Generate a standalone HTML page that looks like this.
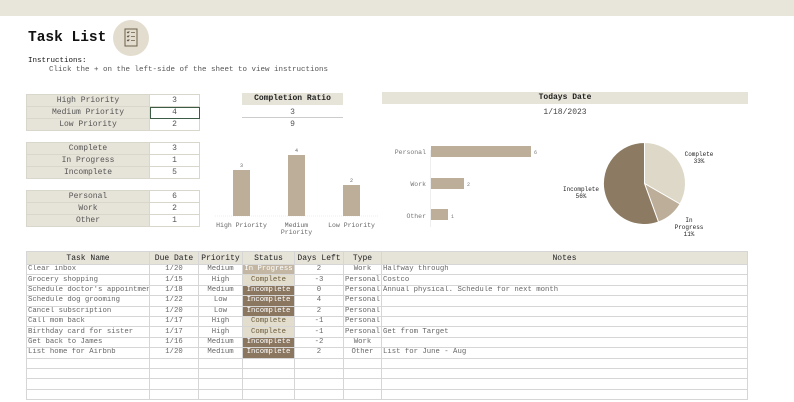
<!DOCTYPE html>
<html><head><style>
*{margin:0;padding:0;box-sizing:border-box}
body{width:794px;height:402px;overflow:hidden;background:#fff;font-family:"Liberation Mono",monospace;color:#555;position:relative;font-size:8px}
.a{position:absolute;white-space:nowrap}
.band{left:0;top:0;width:794px;height:16px;background:#e8e5db}
.lt{position:absolute;left:26px;width:174px;border-collapse:collapse}
.lt td{height:12px;font-size:8px;text-align:center;border:1px solid #d9d6cc;padding:0;line-height:10px;color:#555}
.lt td:first-child{background:#e6e3d8;width:123px}
.hdr{background:#e6e3d8;text-align:center;color:#222;font-weight:bold;font-size:8px;line-height:12px;height:12px}
table.m{position:absolute;left:26px;top:251px;width:722px;border-collapse:collapse;table-layout:fixed}
table.m td,table.m th{border:1px solid #d6d6d6;height:10.4px;font-size:7.3px;line-height:9px;padding:0 1px;overflow:hidden;white-space:nowrap;color:#666;font-weight:normal}
table.m th{background:#e6e3d8;color:#222;height:13px;font-size:8px}
.c{text-align:center}
.ip{background:#c3b7a3;color:#fff!important;text-align:center}
.cp{background:#e2ddcc;color:#6a5a3c!important;text-align:center}
.ic{background:#8b7760;color:#fff!important;text-align:center}
</style></head><body>
<div class="a band"></div>
<div class="a" style="left:28px;top:30px;font-size:14.5px;font-weight:bold;color:#111">Task List</div>
<svg class="a" style="left:112px;top:20px" width="38" height="38"><circle cx="19" cy="18" r="18" fill="#e3ddcf"/><rect x="13" y="9" width="12" height="17" fill="none" stroke="#6b5e4a" stroke-width="1"/><g stroke="#6b5e4a" stroke-width="0.8"><path d="M15 12l1 1 1.5-1.5M19 12.5h4M15 16l1 1 1.5-1.5M19 16.5h4M15 20l1 1 1.5-1.5M19 20.5h4"/></g></svg>
<div class="a" style="left:28px;top:57px;font-size:7.5px;color:#111">Instructions:</div>
<div class="a" style="left:49px;top:66px;font-size:7.5px;color:#555">Click the + on the left-side of the sheet to view instructions</div>

<table class="lt" style="top:94px"><tr><td>High Priority</td><td>3</td></tr><tr><td>Medium Priority</td><td style="outline:1px solid #3d5c45;outline-offset:-1px">4</td></tr><tr><td>Low Priority</td><td>2</td></tr></table>
<table class="lt" style="top:142px"><tr><td>Complete</td><td>3</td></tr><tr><td>In Progress</td><td>1</td></tr><tr><td>Incomplete</td><td>5</td></tr></table>
<table class="lt" style="top:190px"><tr><td>Personal</td><td>6</td></tr><tr><td>Work</td><td>2</td></tr><tr><td>Other</td><td>1</td></tr></table>

<div class="a hdr" style="left:242px;top:93px;width:101px">Completion Ratio</div>
<div class="a" style="left:242px;top:108px;width:101px;text-align:center">3</div>
<div class="a" style="left:242px;top:117px;width:101px;height:1px;background:#ccc"></div>
<div class="a" style="left:242px;top:120px;width:101px;text-align:center">9</div>

<svg class="a" style="left:200px;top:140px" width="180" height="100" font-family="Liberation Mono,monospace" font-size="6.5" fill="#666">
<line x1="15" y1="76" x2="178" y2="76" stroke="#ddd" stroke-width="0.6" stroke-dasharray="1,1"/>
<rect x="33" y="30" width="17" height="46" fill="#bcae99"/>
<rect x="88" y="15" width="17" height="61" fill="#bcae99"/>
<rect x="143" y="45" width="17" height="31" fill="#bcae99"/>
<text x="41.5" y="27" text-anchor="middle" font-size="5">3</text>
<text x="96.5" y="12" text-anchor="middle" font-size="5">4</text>
<text x="151.5" y="42" text-anchor="middle" font-size="5">2</text>
<text x="41.5" y="87" text-anchor="middle">High Priority</text>
<text x="96.5" y="87" text-anchor="middle">Medium</text>
<text x="96.5" y="94" text-anchor="middle">Priority</text>
<text x="151.5" y="87" text-anchor="middle">Low Priority</text>
</svg>

<div class="a hdr" style="left:382px;top:92px;width:366px">Todays Date</div>
<div class="a" style="left:382px;top:108px;width:366px;text-align:center;font-size:8px;color:#444">1/18/2023</div>

<svg class="a" style="left:380px;top:135px" width="170" height="100" font-family="Liberation Mono,monospace" font-size="6.5" fill="#777">
<line x1="50.5" y1="15" x2="50.5" y2="92" stroke="#e3e3e3" stroke-width="0.6"/>
<rect x="51" y="11" width="100" height="11" fill="#bcae99"/>
<rect x="51" y="43" width="33" height="11" fill="#bcae99"/>
<rect x="51" y="74" width="17" height="11" fill="#bcae99"/>
<text x="46" y="19" text-anchor="end">Personal</text><text x="154" y="19" font-size="5">6</text>
<text x="46" y="51" text-anchor="end">Work</text><text x="87" y="51" font-size="5">2</text>
<text x="46" y="83" text-anchor="end">Other</text><text x="71" y="83" font-size="5">1</text>
</svg>

<svg class="a" style="left:555px;top:135px" width="200" height="110" font-family="Liberation Mono,monospace" font-size="6" fill="#222">
<g transform="translate(89.5,48.5)" stroke="#fff" stroke-width="1">
<path d="M0 0L0 -41A41 41 0 0 1 35.5 20.5Z" fill="#ddd8c8"/>
<path d="M0 0L35.5 20.5A41 41 0 0 1 14 38.5Z" fill="#bcae99"/>
<path d="M0 0L14 38.5A41 41 0 1 1 0 -41Z" fill="#8c7a62"/>
</g>
<text x="144" y="21" text-anchor="middle">Complete</text><text x="144" y="28" text-anchor="middle">33%</text>
<text x="26" y="56" text-anchor="middle">Incomplete</text><text x="26" y="63" text-anchor="middle">56%</text>
<text x="134" y="87" text-anchor="middle">In</text><text x="134" y="94" text-anchor="middle">Progress</text><text x="134" y="101" text-anchor="middle">11%</text>
</svg>

<table class="m">
<colgroup><col style="width:123px"><col style="width:49px"><col style="width:44px"><col style="width:52px"><col style="width:49px"><col style="width:38px"><col></colgroup>
<tr><th>Task Name</th><th>Due Date</th><th>Priority</th><th>Status</th><th>Days Left</th><th>Type</th><th>Notes</th></tr>
<tr><td>Clear inbox</td><td class="c">1/20</td><td class="c">Medium</td><td class="ip">In Progress</td><td class="c">2</td><td class="c">Work</td><td>Halfway through</td></tr>
<tr><td>Grocery shopping</td><td class="c">1/15</td><td class="c">High</td><td class="cp">Complete</td><td class="c">-3</td><td>Personal</td><td>Costco</td></tr>
<tr><td>Schedule doctor's appointmen</td><td class="c">1/18</td><td class="c">Medium</td><td class="ic">Incomplete</td><td class="c">0</td><td>Personal</td><td>Annual physical. Schedule for next month</td></tr>
<tr><td>Schedule dog grooming</td><td class="c">1/22</td><td class="c">Low</td><td class="ic">Incomplete</td><td class="c">4</td><td>Personal</td><td></td></tr>
<tr><td>Cancel subscription</td><td class="c">1/20</td><td class="c">Low</td><td class="ic">Incomplete</td><td class="c">2</td><td>Personal</td><td></td></tr>
<tr><td>Call mom back</td><td class="c">1/17</td><td class="c">High</td><td class="cp">Complete</td><td class="c">-1</td><td>Personal</td><td></td></tr>
<tr><td>Birthday card for sister</td><td class="c">1/17</td><td class="c">High</td><td class="cp">Complete</td><td class="c">-1</td><td>Personal</td><td>Get from Target</td></tr>
<tr><td>Get back to James</td><td class="c">1/16</td><td class="c">Medium</td><td class="ic">Incomplete</td><td class="c">-2</td><td class="c">Work</td><td></td></tr>
<tr><td>List home for Airbnb</td><td class="c">1/20</td><td class="c">Medium</td><td class="ic">Incomplete</td><td class="c">2</td><td class="c">Other</td><td>List for June - Aug</td></tr>
<tr><td></td><td></td><td></td><td></td><td></td><td></td><td></td></tr>
<tr><td></td><td></td><td></td><td></td><td></td><td></td><td></td></tr>
<tr><td></td><td></td><td></td><td></td><td></td><td></td><td></td></tr>
<tr><td></td><td></td><td></td><td></td><td></td><td></td><td></td></tr>
</table>
</body></html>
